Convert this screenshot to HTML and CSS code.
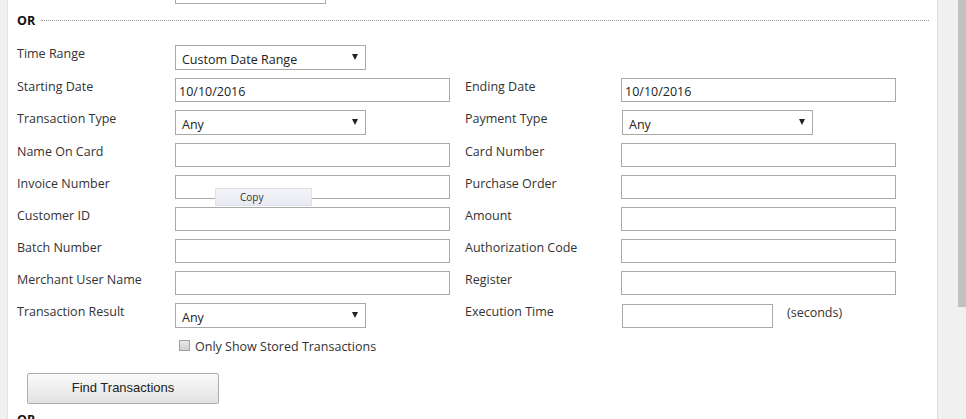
FILE: index.html
```html
<!DOCTYPE html>
<html>
<head>
<meta charset="utf-8">
<link rel="stylesheet" href="styles.css">
</head>
<body>
<div class="page">
  <div class="gutter"></div>
  <main class="main">
    <div class="prev-field"><div class="prev-box"></div></div>
    <div class="or-row"><span class="or">OR</span><span class="or-line"></span></div>

    <div class="form">
      <div class="label">Time Range</div>
      <div class="field"><div class="select w190"><span>Custom Date Range</span><span class="arrow"></span></div></div>
      <div class="label"></div>
      <div class="field"></div>

      <div class="label">Starting Date</div>
      <div class="field"><div class="input wide">10/10/2016</div></div>
      <div class="label">Ending Date</div>
      <div class="field"><div class="input wide">10/10/2016</div></div>

      <div class="label">Transaction Type</div>
      <div class="field"><div class="select w190"><span>Any</span><span class="arrow"></span></div></div>
      <div class="label">Payment Type</div>
      <div class="field"><div class="select w190 nudge"><span>Any</span><span class="arrow"></span></div></div>

      <div class="label">Name On Card</div>
      <div class="field"><div class="input wide"></div></div>
      <div class="label">Card Number</div>
      <div class="field"><div class="input wide"></div></div>

      <div class="label">Invoice Number</div>
      <div class="field"><div class="input wide"></div></div>
      <div class="label">Purchase Order</div>
      <div class="field"><div class="input wide"></div></div>

      <div class="label">Customer ID</div>
      <div class="field"><div class="input wide"></div></div>
      <div class="label">Amount</div>
      <div class="field"><div class="input wide"></div></div>

      <div class="label">Batch Number</div>
      <div class="field"><div class="input wide"></div></div>
      <div class="label">Authorization Code</div>
      <div class="field"><div class="input wide"></div></div>

      <div class="label">Merchant User Name</div>
      <div class="field"><div class="input wide"></div></div>
      <div class="label">Register</div>
      <div class="field"><div class="input wide"></div></div>

      <div class="label">Transaction Result</div>
      <div class="field"><div class="select w190"><span>Any</span><span class="arrow"></span></div></div>
      <div class="label">Execution Time</div>
      <div class="field exec"><div class="input short nudge"></div><span class="unit">(seconds)</span></div>

      <div class="label"></div>
      <div class="field check-row"><span class="checkbox"></span><span>Only Show Stored Transactions</span></div>
    </div>

    <div class="actions"><button class="btn">Find Transactions</button></div>
    <div class="or-row bottom"><span class="or">OR</span></div>

    <div class="tooltip">Copy</div>
  </main>
  <div class="rail"><div class="thumb"></div></div>
</div>
</body>
</html>
```
FILE: styles.css
```css
html, body {
  margin: 0;
  padding: 0;
  height: 100%;
  overflow: hidden;
}
body {
  font-family: "Open Sans", "Noto Sans", sans-serif;
  font-size: 12.5px;
  color: #333;
  background: #fff;
}
.page {
  display: flex;
  height: 419px;
  overflow: hidden;
}
.gutter {
  width: 7px;
  background: #f0f0f0;
  border-right: 1px solid #e2e2e2;
  flex: none;
}
.main {
  position: relative;
  flex: 1;
  padding: 0 8px 0 9px;
  overflow: hidden;
}
.prev-field {
  height: 4px;
  padding-left: 158px;
}
.prev-box {
  width: 149px;
  height: 3px;
  border: 1px solid #aaa;
  border-top: none;
}
.or-row {
  display: flex;
  align-items: center;
  height: 17px;
  margin-top: 8px;
}
.or {
  font-weight: bold;
  color: #111;
  line-height: 17px;
}
.or-line {
  flex: 1;
  margin-left: 6px;
  border-top: 1px dotted #999;
  height: 0;
}
.form {
  display: grid;
  grid-template-columns: 158px 290px 156px 1fr;
  row-gap: 8px;
  margin-top: 16px;
}
.label {
  line-height: 18px;
  white-space: nowrap;
}
.field {
  display: flex;
  align-items: center;
}
.input {
  box-sizing: border-box;
  height: 24px;
  border: 1px solid #a9a9a9;
  padding: 4px 3px 0;
  line-height: 18px;
  color: #222;
  background: #fff;
}
.wide { width: 275px; }
.short { width: 151px; }
.nudge { margin-left: 1px; }
.select {
  box-sizing: border-box;
  height: 25px;
  border: 1px solid #a9a9a9;
  display: flex;
  align-items: center;
  justify-content: space-between;
  padding: 3px 7px 0 6px;
  color: #222;
  background: #fff;
}
.w190 { width: 191px; }
.arrow {
  width: 0;
  height: 0;
  border-left: 3px solid transparent;
  border-right: 3px solid transparent;
  border-top: 6px solid #222;
  margin-top: -4px;
}
.exec .unit {
  margin-left: 14px;
  margin-top: -6px;
}
.check-row {
  grid-column: 2 / 5;
  height: 18px;
  padding-left: 4px;
  gap: 5px;
  margin-top: 1px;
}
.checkbox {
  box-sizing: border-box;
  width: 11px;
  height: 11px;
  border: 1px solid #a0a0a0;
  background: linear-gradient(#e9e9e9, #cfcfcf);
  margin-top: -1px;
}
.actions {
  margin-top: 18px;
  padding-left: 10px;
}
.btn {
  width: 192px;
  height: 31px;
  border: 1px solid #adadad;
  border-radius: 2px;
  background: linear-gradient(#fafafa, #e2e2e2);
  font-family: "Liberation Sans", Arial, sans-serif;
  font-size: 13px;
  color: #222;
  padding: 0 0 3px;
}
.or-row.bottom {
  margin-top: 7px;
}
.tooltip {
  position: absolute;
  left: 207px;
  top: 188px;
  width: 97px;
  height: 18px;
  box-sizing: border-box;
  background: linear-gradient(#f3f4f8, #e7eaf2);
  border: 1px solid #dde1ea;
  font-size: 10px;
  line-height: 16px;
  padding-left: 24px;
  color: #333;
}
.rail {
  width: 28px;
  flex: none;
  background: #f0f0f0;
  border-left: 1px solid #dcdcdc;
  display: flex;
  justify-content: flex-end;
  align-items: flex-start;
}
.thumb {
  width: 8px;
  height: 307px;
  background: #c1c1c1;
}
```
